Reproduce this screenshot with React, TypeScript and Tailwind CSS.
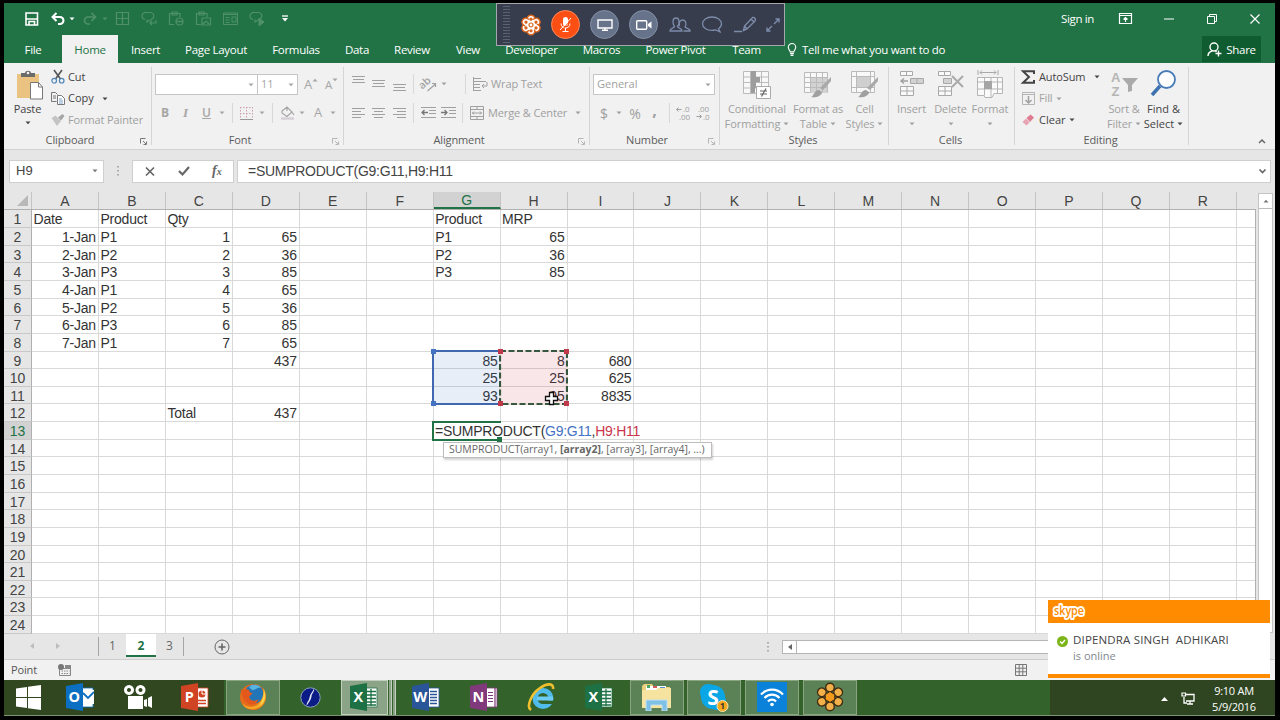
import React from 'react';

const COLUMNS = ['A', 'B', 'C', 'D', 'E', 'F', 'G', 'H', 'I', 'J', 'K', 'L', 'M', 'N', 'O', 'P', 'Q', 'R'];
const ROWS = Array.from({ length: 24 }, (_, i) => i + 1);

const CELLS: Record<string, string> = {
  A1: 'Date', B1: 'Product', C1: 'Qty', G1: 'Product', H1: 'MRP',
  A2: '1-Jan', B2: 'P1', C2: '1', D2: '65', G2: 'P1', H2: '65',
  A3: '2-Jan', B3: 'P2', C3: '2', D3: '36', G3: 'P2', H3: '36',
  A4: '3-Jan', B4: 'P3', C4: '3', D4: '85', G4: 'P3', H4: '85',
  A5: '4-Jan', B5: 'P1', C5: '4', D5: '65',
  A6: '5-Jan', B6: 'P2', C6: '5', D6: '36',
  A7: '6-Jan', B7: 'P3', C7: '6', D7: '85',
  A8: '7-Jan', B8: 'P1', C8: '7', D8: '65',
  D9: '437', G9: '85', H9: '8', I9: '680',
  G10: '25', H10: '25', I10: '625',
  G11: '93', H11: '95', I11: '8835',
  C12: 'Total', D12: '437',
};

const isRight = (value: string) => /^\d/.test(value);

interface IconProps {
  w: number;
  h: number;
  className?: string;
  children: React.ReactNode;
}

const Icon: React.FC<IconProps> = ({ w, h, className = '', children }) => (
  <svg width={w} height={h} viewBox={`0 0 ${w} ${h}`} fill="none" stroke="currentColor" className={`shrink-0 overflow-visible ${className}`}>
    {children}
  </svg>
);

const Caret: React.FC<{ className?: string }> = ({ className = '' }) => (
  <Icon w={6} h={4} className={className}>
    <path d="M0.5 0.5h5L3 3.3z" fill="currentColor" stroke="none" />
  </Icon>
);

const Launcher: React.FC<{ className?: string }> = ({ className = '' }) => (
  <Icon w={7} h={7} className={className}>
    <path d="M0.5 5.500V0.500H5.500M3 3l3 3M6.500 3.500v3H3.500" />
  </Icon>
);

/* ---------- title bar ---------- */

const TitleBar = () => (
  <div className="flex h-[32px] items-center pb-px text-white">
    <Icon w={13} h={14} className="ml-[21px]">
      <path d="M1 1h11.500v12H1z" strokeWidth="1.600" />
      <path d="M1 7h11.500M4 13V9.500h5.500V13" strokeWidth="1.600" />
    </Icon>
    <Icon w={14} h={13} className="ml-[13px]">
      <path d="M1.500 5H9a3.400 3.400 0 0 1 0 7H7M5.500 1l-4 4 4 4" strokeWidth="2" />
    </Icon>
    <Caret className="ml-[4px]" />
    <div className="flex items-center text-[#4f9068]">
      <Icon w={14} h={13} className="ml-[8px]">
        <path d="M12.500 5H5a3.400 3.400 0 0 0 0 7h2M8.500 1l4 4-4 4" strokeWidth="1.700" />
      </Icon>
      <Caret className="ml-[5px]" />
      <Icon w={13} h={13} className="ml-[8px]">
        <path d="M0.500 0.500h12v12H0.500zM6.500 0.500v12M0.500 6.500h12" strokeWidth="1.200" />
      </Icon>
      <Icon w={15} h={15} className="ml-[13px]">
        <path d="M3 8.500A3.500 3.500 0 0 1 4 1.500h5a3.500 3.500 0 0 1 1 6.500L5 11V8.500M14 9v3H8M10 10l-2 2 2 2" strokeWidth="1.200" />
      </Icon>
      <Icon w={15} h={15} className="ml-[12px]">
        <path d="M5 13.500H0.500v-11H11V6M3 2.500V1h5v3H3z" strokeWidth="1.200" />
        <circle cx="10.500" cy="10.500" r="3.500" strokeWidth="1.200" />
        <path d="M7 10.500h7" strokeWidth="1.500" />
      </Icon>
      <Icon w={15} h={15} className="ml-[12px]">
        <path d="M5 13.500H0.500v-11H11V6M3 2.500V1h5v3H3zM6 7h8.500v7H6zM7 13l3-3 3 3" strokeWidth="1.200" />
      </Icon>
      <Icon w={15} h={13} className="ml-[12px]">
        <path d="M0.500 1h14v11.500H0.500zM0.500 2.500h14M2.500 5.500h4M2.500 8h4M2.500 10.500h4M9 5h4v5H9z" />
      </Icon>
      <Icon w={15} h={15} className="ml-[12px]">
        <path d="M3 8.500A3.500 3.500 0 0 1 4 1.500h5a3.500 3.500 0 0 1 1 6.500L5 11V8.500" strokeWidth="1.200" />
        <path d="M9 7l5 4-5 4z" fill="currentColor" />
      </Icon>
    </div>
    <Icon w={6} h={7} className="ml-[17px]">
      <path d="M0 1h6" strokeWidth="1.300" />
      <path d="M0 3h6L3 6.500z" fill="currentColor" stroke="none" />
    </Icon>
    <span className="ml-[773px] w-[34px] text-[11.500px] tracking-[-0.35px] whitespace-nowrap">Sign in</span>
    <Icon w={13} h={11} className="ml-[24px]">
      <path d="M0.500 0.500h12v10H0.500zM0.500 2.500h12M6.500 9V4.500M4.500 6.500l2-2 2 2" strokeWidth="1.200" />
    </Icon>
    <Icon w={10} h={2} className="ml-[32px]">
      <path d="M0 1h10" />
    </Icon>
    <Icon w={10} h={10} className="ml-[33px]">
      <path d="M0.500 2.500h7v7h-7zM2.500 2.500v-2h7v7h-2" />
    </Icon>
    <Icon w={10} h={10} className="ml-[33px]">
      <path d="M0.500 0.500l9 9M9.500 0.500l-9 9" strokeWidth="1.200" />
    </Icon>
  </div>
);

const TabBar = () => (
  <div className="flex h-[28px] items-center text-center text-[11.500px] tracking-[-0.3px] whitespace-nowrap text-white *:pt-px">
    <span className="w-[58px]">File</span>
    <span className="flex h-full w-[56px] items-center justify-center bg-[#f1f1f1] text-[#217346]">Home</span>
    <span className="w-[55px]">Insert</span>
    <span className="w-[86px]">Page Layout</span>
    <span className="w-[74px]">Formulas</span>
    <span className="w-[48px]">Data</span>
    <span className="w-[62px]">Review</span>
    <span className="w-[50px]">View</span>
    <span className="w-[77px]">Developer</span>
    <span className="w-[63px]">Macros</span>
    <span className="w-[85px]">Power Pivot</span>
    <span className="w-[57px]">Team</span>
    <Icon w={10} h={14} className="ml-[12px]">
      <path d="M3 9.500C3 8 1 7 1 4.500a4 4 0 0 1 8 0C9 7 7 8 7 9.500zM3 11.500h4M3.500 13.300h3" strokeWidth="1.200" />
    </Icon>
    <span className="ml-[5px] w-[141px] text-left">Tell me what you want to do</span>
    <span className="ml-[259px] flex h-[26px] w-[59px] items-center justify-center gap-1 bg-[#0e5c2f]">
      <Icon w={15} h={15}>
        <circle cx="7" cy="5" r="4" strokeWidth="1.400" />
        <path d="M1 14c0-2.500 2-4.500 4.500-5M8.500 9l1 1M11.500 8.500v6M8.500 11.500h6" strokeWidth="1.400" />
      </Icon>
      Share
    </span>
  </div>
);

const Flower: React.FC<{ size: number; petal: string; core: string; line: string }> = ({ size, petal, core, line }) => (
  <svg width={size} height={size} viewBox="-14 -14 28 28" className="shrink-0">
    {[0, 60, 120, 180, 240, 300].map((deg) => (
      <g key={deg} transform={`rotate(${deg})`}>
        <path d="M0 0V-8" stroke={line} strokeWidth="4.500" />
        <path d="M0 0V-8" stroke={core} strokeWidth="2" />
        <circle cy="-8.800" r="4" fill={petal} stroke={line} strokeWidth="1.300" />
      </g>
    ))}
    <circle r="4" fill={core} />
  </svg>
);

const MeetingBar = () => (
  <div className="absolute top-[3px] left-[496px] flex h-[43px] w-[289px] items-center border border-[#a4a8ac] bg-[#373d4d] text-[#7d8cab]">
    <div className="ml-[6px] flex h-[37px] w-[7px] flex-col justify-between">
      {Array.from({ length: 13 }, (_, i) => (
        <span key={i} className="h-px bg-[#596273]" />
      ))}
    </div>
    <svg width="22" height="22" viewBox="-11 -11 22 22" className="ml-[10px]">
      {[0, 60, 120, 180, 240, 300].map((deg) => (
        <circle key={deg} cy="-6" r="3.800" fill="#fff" stroke="#d9641e" strokeWidth="1.500" transform={`rotate(${deg})`} />
      ))}
      <circle r="5.800" fill="#fff" />
      {[0, 60, 120, 180, 240, 300].map((deg) => (
        <circle key={deg} cy="-5.800" r="1.600" fill="#d9641e" transform={`rotate(${deg})`} />
      ))}
      <circle r="2" fill="none" stroke="#d9641e" strokeWidth="1.200" />
    </svg>
    <span className="ml-[9px] flex size-[29px] items-center justify-center rounded-full border border-[#ff8a5c] bg-[#fb4f14] text-white">
      <Icon w={13} h={17}>
        <rect x="4" y="1" width="5" height="9" rx="2.500" fill="currentColor" stroke="none" />
        <path d="M2 7.500c0 6 9 6 9 0M6.500 12v3.500M3.500 15.500h6M1 14L12 2" />
        <path d="M2 15L12 4" stroke="#fb4f14" />
      </Icon>
    </span>
    <span className="ml-[10px] flex size-[29px] items-center justify-center rounded-full border border-[#8591a6] bg-[#66738a] text-white">
      <Icon w={16} h={12}>
        <path d="M1 1h14v8H1z" strokeWidth="1.400" />
        <path d="M8 9v2M5 11.300h6" strokeWidth="1.400" />
      </Icon>
    </span>
    <span className="ml-[10px] flex size-[29px] items-center justify-center rounded-full border border-[#8591a6] bg-[#66738a] text-white">
      <Icon w={16} h={10}>
        <rect x="0.700" y="0.700" width="10" height="8.500" rx="1" strokeWidth="1.400" />
        <path d="M12 4l3.500-2.500v7L12 6z" fill="currentColor" stroke="none" />
      </Icon>
    </span>
    <Icon w={22} h={15} className="ml-[11px]">
      <path d="M1 14c0-3 4-2.500 4.500-4.500C3 6 3.500 1 7 1s4 5 1.500 8.500C9 11.500 13 11 13 14zM10.500 9C9.500 5 11.500 3 14 3s4 3.500 2 7c.5 1.500 5 1 5 4h-6.500" strokeWidth="1.300" />
    </Icon>
    <Icon w={20} h={17} className="ml-[11px]">
      <path d="M16.500 12.700C19 11 19.500 9.300 19.500 7.700C19.500 4 15.300 1 10 1S0.500 4 0.500 7.700 4.700 14.400 10 14.400c1.200 0 2.300-.2 3.400-.5L18 15.800z" strokeWidth="1.300" />
    </Icon>
    <Icon w={24} h={17} className="ml-[11px]">
      <path d="M1 15.500h8M10.500 14.500l1-4.500 8-8.500q1.500-.5 2.500 1t0 2.500L14 13zM18 3l3 3M11.500 10l2.500 3" strokeWidth="1.400" />
    </Icon>
    <Icon w={14} h={14} className="ml-[9px]">
      <path d="M8 6l5-5M9.500 1H13v3.500M6 8l-5 5M1 9.500V13h3.500" strokeWidth="1.400" />
    </Icon>
  </div>
);

/* ---------- ribbon ---------- */

interface GroupProps {
  label: string;
  className: string;
  launcher?: string;
  children: React.ReactNode;
}

const Group: React.FC<GroupProps> = ({ label, className, launcher, children }) => (
  <div className={`my-[4px] flex shrink-0 flex-col border-r border-[#d5d5d5] ${className}`}>
    <div className="flex h-[68px]">{children}</div>
    <div className="flex h-[13px] items-center text-[#5c5c5c]">
      <span className="flex-1 pt-[4px] pr-[2px] text-center whitespace-nowrap">{label}</span>
      {launcher && (
        <span className="w-[13px] pt-[5px]">
          <Launcher className={`ml-[2px] ${launcher}`} />
        </span>
      )}
    </div>
  </div>
);

const Sep: React.FC<{ className?: string }> = ({ className = '' }) => (
  <span className={`h-[20px] w-px shrink-0 bg-[#d8d8d8] ${className}`} />
);

const AlignLines: React.FC<{ lines: string; className?: string }> = ({ lines, className = '' }) => (
  <Icon w={14} h={12} className={className}>
    <path d={lines} />
  </Icon>
);

const ClipboardGroup = () => (
  <Group label="Clipboard" className="w-[148px]" launcher="text-[#777]">
    <div className="flex w-[47px] flex-col items-center pt-[3px] text-[#444]">
      <Icon w={28} h={30} className="ml-[5px]">
        <path d="M1 4h22v24H1z" fill="#eac282" stroke="none" />
        <path d="M5 7V3h4c0-3 6-3 6 0h4v4z" fill="#6b6b6b" stroke="none" />
        <circle cx="12" cy="3" r="1.300" fill="#f1f1f1" stroke="none" />
        <path d="M14.500 12.500h8l4 4.500v12h-12z" fill="#fff" stroke="#777" />
        <path d="M22.500 12.500V17h4" stroke="#777" />
      </Icon>
      <span className="mt-px leading-[15px]">Paste</span>
      <Caret className="mt-[5px]" />
    </div>
    <div className="flex flex-col text-[#444]">
      <div className="flex h-[20px] items-center">
        <Icon w={14} h={14} className="mr-[3px]">
          <path d="M3 0l6.500 9M11 0L4.500 9" stroke="#555" strokeWidth="1.600" />
          <circle cx="3.200" cy="10.700" r="2.300" stroke="#4f86b8" strokeWidth="1.200" />
          <circle cx="10.700" cy="10.700" r="2.300" stroke="#4f86b8" strokeWidth="1.200" />
        </Icon>
        Cut
      </div>
      <div className="flex h-[23px] items-center">
        <Icon w={14} h={13} className="mr-[3px]">
          <path d="M5.500 9.500h-5v-9h4l2 2M2 4h3M2 6h3" stroke="#777" />
          <path d="M6.500 3.500h4l3 3v6h-7z" fill="#fff" stroke="#777" />
          <path d="M8 7h3M8 9h4M8 11h4" stroke="#5b87b5" strokeWidth="0.800" />
        </Icon>
        <span className="w-[34px] tracking-normal">Copy</span>
        <Caret />
      </div>
      <div className="flex h-[20px] items-center text-[#a0a0a0]">
        <Icon w={14} h={14} className="mr-[3px]">
          <path d="M0.500 5l4-2.500 5.500 5.500-4 5z" fill="#c4c4c4" stroke="none" />
          <path d="M7 4.500L11.500 1l2 2L10 7.500z" fill="#a5a5a5" stroke="none" />
        </Icon>
        <span className="whitespace-nowrap">Format Painter</span>
      </div>
    </div>
  </Group>
);

const FontGroup = () => (
  <Group label="Font" className="w-[192px]" launcher="text-[#b5b5b5]">
    <div className="ml-[3px] flex flex-col pt-[7px] text-[#a6a6a6]">
      <div className="flex h-[21px] items-center">
        <div className="flex h-full w-[103px] items-center justify-end border border-[#c6c6c6] bg-white pr-[3px]">
          <Caret />
        </div>
        <div className="flex h-full w-[40px] items-center justify-between border border-l-0 border-[#c6c6c6] bg-white pr-[3px] pl-[3px]">
          11 <Caret />
        </div>
        <span className="ml-[6px] text-[13px] leading-none">A</span>
        <Caret className="mb-[10px] rotate-180" />
        <span className="ml-[7px] text-[11.500px] leading-none">A</span>
        <Caret className="mb-[10px]" />
      </div>
      <div className="mt-[8px] flex h-[20px] items-center">
        <span className="w-[20px] text-center text-[12px] font-bold">B</span>
        <span className="w-[21px] text-center font-['Liberation_Serif',serif] text-[13px] font-bold italic">I</span>
        <span className="w-[21px] text-center text-[12px] font-semibold underline">U</span>
        <Caret className="ml-[2px]" />
        <Sep className="ml-[7px]" />
        <Icon w={13} h={13} className="ml-[7px]">
          <path d="M0.500 0v12M6.500 0v12M12.500 0v12M0 0.500h13M0 6.500h13" stroke="#cf9fb0" strokeDasharray="1.500 1.500" />
          <path d="M0 12.500h13" stroke="#999" />
        </Icon>
        <Caret className="ml-[6px]" />
        <Sep className="ml-[7px]" />
        <Icon w={15} h={14} className="ml-[7px]">
          <path d="M2 5l5-4 5 5-5 4.500L2 7zM7 1v4M12 6l2 3" strokeWidth="1.200" />
          <path d="M1 12.500h13" stroke="#d5cfd8" strokeWidth="2.500" />
        </Icon>
        <Caret className="ml-[4px]" />
        <span className="ml-[7px] w-[12px] text-center text-[13px]">A</span>
        <Caret className="ml-[6px]" />
      </div>
    </div>
  </Group>
);

const AlignmentGroup = () => (
  <Group label="Alignment" className="w-[246px]" launcher="text-[#b5b5b5]">
    <div className="flex flex-col pt-[7px] text-[#a0a0a0]">
      <div className="flex h-[20px] items-center">
        <AlignLines className="mb-[6px] ml-[8px]" lines="M0 1.500h13M1 4.500h11M0 7.500h13" />
        <AlignLines className="ml-[6px]" lines="M0 2.500h13M1 5.500h11M0 8.500h13" />
        <AlignLines className="mt-[8px] ml-[7px]" lines="M0 2.500h13M1 5.500h11M0 8.500h13" />
        <Sep className="ml-[6px]" />
        <Icon w={16} h={15} className="ml-[7px] font-semibold">
          <text x="-1" y="9" fontSize="10.500" fill="currentColor" stroke="none" transform="rotate(-42 5 8)">ab</text>
          <path d="M6.500 14l8-7M11 6.500h3.500V10" strokeWidth="1.200" />
        </Icon>
        <Caret className="ml-[4px]" />
        <Sep className="ml-[18px]" />
        <Icon w={15} h={15} className="ml-[7px]">
          <path d="M0 1.500h8M0 4.500h13M0 7.500h7M0 10.500h7M0 13.500h8M0.500 0v14M14 5v4H9M11 7L9 9l2 2" />
        </Icon>
        <span className="ml-[3px] whitespace-nowrap">Wrap Text</span>
      </div>
      <div className="mt-[9px] flex h-[20px] items-center">
        <AlignLines className="ml-[8px]" lines="M0 1.500h13M0 4.500h9M0 7.500h13M0 10.500h9" />
        <AlignLines className="ml-[6px]" lines="M0 1.500h13M2 4.500h9M0 7.500h13M2 10.500h9" />
        <AlignLines className="ml-[7px]" lines="M0 1.500h13M4 4.500h9M0 7.500h13M4 10.500h9" />
        <Sep className="ml-[6px]" />
        <Icon w={15} h={12} className="ml-[7px]">
          <path d="M0 0.500h15M8 3.500h7M8 6.500h7M0 10.500h15" />
          <path d="M1 5.500h6M3.500 3L1 5.500 3.500 8" stroke="#777" strokeWidth="1.300" />
        </Icon>
        <Icon w={15} h={12} className="ml-[5px]">
          <path d="M0 0.500h15M8 3.500h7M8 6.500h7M0 10.500h15" />
          <path d="M0 5.500h6M3.500 3L6 5.500 3.500 8" stroke="#777" strokeWidth="1.300" />
        </Icon>
        <Sep className="ml-[6px]" />
        <Icon w={14} h={14} className="ml-[7px]">
          <path d="M0.500 0.500h13v13H0.500zM0.500 3.500h13M0.500 10.500h13M7 0v3M7 10v4M2 7h10M4 5.500L2.500 7 4 8.500M10 5.500L11.500 7 10 8.500" />
        </Icon>
        <span className="ml-[4px] w-[85px] whitespace-nowrap">Merge &amp; Center</span>
        <Caret className="ml-[2px]" />
      </div>
    </div>
  </Group>
);

const NumberGroup = () => (
  <Group label="Number" className="w-[130px]" launcher="text-[#b5b5b5]">
    <div className="ml-[3px] flex flex-col pt-[7px] text-[#a0a0a0]">
      <div className="flex h-[21px] w-[122px] items-center justify-between border border-[#c6c6c6] bg-white pr-[3px] pl-[3px] tracking-normal">
        General <Caret />
      </div>
      <div className="mt-[8px] flex h-[20px] items-center">
        <span className="w-[22px] text-center text-[14px]">$</span>
        <Caret className="ml-[1px]" />
        <span className="ml-[3px] w-[20px] text-center text-[14px]">%</span>
        <span className="mb-[6px] w-[19px] text-center text-[16px] leading-[10px] font-bold">,</span>
        <Sep className="ml-[5px]" />
        <Icon w={14} h={14} className="ml-[6px]">
          <path d="M0.500 3.500h5M2.500 1.500l-2 2 2 2" />
          <text x="7" y="6" fontSize="8" fill="currentColor" stroke="none">.0</text>
          <text x="3" y="14" fontSize="8" fill="currentColor" stroke="none">.00</text>
        </Icon>
        <Icon w={14} h={14} className="ml-[6px]">
          <text x="2" y="6" fontSize="8" fill="currentColor" stroke="none">.00</text>
          <path d="M0.500 10.500h5M3.500 8.500l2 2-2 2" />
          <text x="7" y="14" fontSize="8" fill="currentColor" stroke="none">.0</text>
        </Icon>
      </div>
    </div>
  </Group>
);

interface BigButtonProps {
  className: string;
  lines: [string, string?];
  children: React.ReactNode;
}

const BigButton: React.FC<BigButtonProps> = ({ className, lines, children }) => (
  <div className={`flex shrink-0 flex-col items-center pt-[3px] whitespace-nowrap ${className}`}>
    <div className="flex h-[31px] items-start">{children}</div>
    <span className="leading-[15px]">{lines[0]}</span>
    <span className="flex h-[15px] items-center gap-[3px] leading-[15px]">
      {lines[1]} <Caret />
    </span>
  </div>
);

const Brush = () => (
  <>
    <path d="M27 7v4l-8 9-3-2z" fill="#a8a8a8" stroke="none" />
    <path d="M7 27c3-1 3-7 8-7l3 2c0 4-6 6-11 5z" fill="#a0a0a0" stroke="none" />
  </>
);

const StylesGroup = () => (
  <Group label="Styles" className="w-[169px]">
    <BigButton className="w-[74px] tracking-[-0.05px] text-[#a0a0a0]" lines={['Conditional', 'Formatting']}>
      <Icon w={28} h={29}>
        <path d="M0.500 1.500h25v22H0.500zM7.500 1.500v22M18.500 1.500v22M0.500 7h25M0.500 12.500h25M0.500 18h25" stroke="#bbb" fill="#f8f8f8" />
        <path d="M8 1h5v6H8zM8 7h9v5H8zM8 12h5v6H8zM8 18h4v5H8z" fill="#9d9d9d" stroke="none" />
        <path d="M13.500 16.500h14v12h-14z" fill="#fff" stroke="#aaa" />
        <path d="M17 21h7M17 24h7M23 18.500l-4.500 8" stroke="#666" strokeWidth="1.200" />
      </Icon>
    </BigButton>
    <BigButton className="w-[48px] text-[#a0a0a0]" lines={['Format as', 'Table']}>
      <Icon w={28} h={29}>
        <path d="M0.500 2.500h23v20H0.500z" fill="#f8f8f8" stroke="#bbb" />
        <path d="M6 7h17v16H6z" fill="#d2d2d2" stroke="none" />
        <path d="M0.500 7.500h23M0.500 12.500h23M0.500 17.500h23M6.500 2.500v20M12.500 2.500v20M18.500 2.500v20" stroke="#bbb" />
        <Brush />
      </Icon>
    </BigButton>
    <BigButton className="w-[45px] text-[#a0a0a0]" lines={['Cell', 'Styles']}>
      <Icon w={28} h={29}>
        <path d="M0.500 1.500h23v21H0.500zM5.500 1.500v21M19.500 1.500v21M0.500 6.500h23M0.500 17.500h23" fill="#f8f8f8" stroke="#bbb" />
        <path d="M6 7h13v10H6z" fill="#cfcfcf" stroke="none" />
        <Brush />
      </Icon>
    </BigButton>
  </Group>
);

const CellsGroup = () => (
  <Group label="Cells" className="w-[126px]">
    <BigButton className="w-[45px] text-[#a0a0a0]" lines={['Insert']}>
      <Icon w={25} h={28}>
        <path d="M1.500 1.500h12v4h-12zM7.500 1.500v4M1.500 16.500h13v9h-13zM1.500 21h13M8 16.500v9" fill="#fafafa" stroke="#a8a8a8" />
        <path d="M11.500 8.500h13v5h-13zM18 8.500v5" fill="#d2d2d2" stroke="#a8a8a8" />
        <path d="M2 11h7M5 8.500L2 11l3 2.500" strokeWidth="1.400" />
      </Icon>
    </BigButton>
    <BigButton className="w-[33px] text-[#a0a0a0]" lines={['Delete']}>
      <Icon w={27} h={28}>
        <path d="M1.500 1.500h12v4h-12zM7.500 1.500v4M1.500 16.500h13v9h-13zM1.500 21h13M8 16.500v9" fill="#fafafa" stroke="#a8a8a8" />
        <path d="M6.500 8.500h8v5h-8z" fill="#d2d2d2" stroke="#a8a8a8" />
        <path d="M15 6l11 11M26 6L15 17" stroke="#aaa" strokeWidth="2" />
      </Icon>
    </BigButton>
    <BigButton className="w-[46px] tracking-normal text-[#a0a0a0]" lines={['Format']}>
      <Icon w={27} h={29}>
        <path d="M1 0v5M21 0v5M3 2.500h16M5 0.500l-2 2 2 2M17 0.500l2 2-2 2" stroke="#aaa" />
        <path d="M0.500 7.500h25v16H17l-2 4H8l-1-2H0.500zM0.500 12h25M0.500 19h25M7.500 7.500v18M14 7.500V27M20.500 7.500v16" fill="#fafafa" stroke="#b5b5b5" />
        <path d="M7 11h8v8H7z" fill="#a5a5a5" stroke="none" />
      </Icon>
    </BigButton>
  </Group>
);

const EditingGroup = () => (
  <Group label="Editing" className="w-[174px]">
    <div className="ml-[6px] flex w-[87px] flex-col text-[#444]">
      <div className="flex h-[20px] items-center">
        <Icon w={14} h={14}>
          <path d="M13 4V1.200H2L8 7l-6 5.800h11V10" strokeWidth="2" />
        </Icon>
        <span className="ml-[4px] w-[49px]">AutoSum</span>
        <Caret className="ml-[6px]" />
      </div>
      <div className="flex h-[23px] items-center text-[#a0a0a0]">
        <Icon w={13} h={13} className="ml-px">
          <path d="M0.500 0.500h12v12H0.500zM0.500 2.500h12" stroke="#b5b5b5" />
          <path d="M6.500 4v7M3.500 8l3 3 3-3" strokeWidth="1.500" />
        </Icon>
        <span className="ml-[4px]">Fill</span>
        <Caret className="ml-[3px]" />
      </div>
      <div className="flex h-[20px] items-center">
        <Icon w={13} h={12} className="ml-px">
          <path d="M4.500 4l4-3.500 3.500 3-4 4.500z" fill="#e07a90" stroke="none" />
          <path d="M0.500 8L4 4.500l3.500 4-3 3z" fill="#e6a3b2" stroke="none" />
        </Icon>
        <span className="ml-[4px] tracking-normal">Clear</span>
        <Caret className="ml-[3px]" />
      </div>
    </div>
    <BigButton className="w-[32px] text-[#a0a0a0]" lines={['Sort &', 'Filter']}>
      <Icon w={27} h={28} className="font-['Liberation_Sans',Arial,sans-serif] tracking-normal">
        <text x="0" y="11.500" fontSize="13" fontWeight="700" fill="#b5b5b5" stroke="none">A</text>
        <text x="0.500" y="25.500" fontSize="13" fontWeight="700" fill="#b5b5b5" stroke="none">Z</text>
        <path d="M11 8h16l-6 7v6l-4 1v-7z" fill="#aaa" stroke="none" />
      </Icon>
    </BigButton>
    <BigButton className="w-[47px] tracking-normal text-[#444]" lines={['Find &', 'Select']}>
      <Icon w={27} h={28}>
        <path d="M10 16L2 25" stroke="#3f73b0" strokeWidth="3.500" />
        <circle cx="16.500" cy="9.500" r="8.500" fill="#fdfdfd" stroke="#4a7db8" strokeWidth="1.800" />
      </Icon>
    </BigButton>
  </Group>
);

const Ribbon = () => (
  <div className="flex h-[87px] border-b border-[#d2d2d2] bg-[#f1f1f1] text-[11px] tracking-[-0.12px]">
    <ClipboardGroup />
    <FontGroup />
    <AlignmentGroup />
    <NumberGroup />
    <StylesGroup />
    <CellsGroup />
    <EditingGroup />
    <Icon w={8} h={6} className="mt-auto mb-[5px] ml-[69px] text-[#666]">
      <path d="M1 5l3-3 3 3" strokeWidth="1.500" />
    </Icon>
  </div>
);

/* ---------- formula bar ---------- */

const FormulaBar = () => (
  <div className="flex h-[42px] items-center pl-[5px] font-['Liberation_Sans',Arial,sans-serif] text-[14px] text-[#444]">
    <div className="flex h-[23px] w-[95px] items-center justify-between border border-[#cfcfcf] bg-white pr-[5px] pl-[6px]">
      <span className="text-[13px]">H9</span>
      <Caret className="text-[#777]" />
    </div>
    <Icon w={2} h={10} className="ml-[13px] text-[#999]">
      <path d="M1 0v10" strokeDasharray="1.500 2.500" strokeWidth="1.500" />
    </Icon>
    <div className="ml-[13px] flex h-[23px] w-[102px] items-center border border-[#cfcfcf] bg-white text-[#666]">
      <Icon w={10} h={9} className="ml-[12px]">
        <path d="M1 0.500l8 8M9 0.500l-8 8" strokeWidth="1.700" />
      </Icon>
      <Icon w={12} h={10} className="ml-[23px]">
        <path d="M1 5l3.500 3.500L11 1" strokeWidth="2.200" />
      </Icon>
      <span className="ml-[22px] font-['Liberation_Serif',serif] text-[14px] leading-none font-bold italic">
        f<span className="text-[10px]">x</span>
      </span>
    </div>
    <div className="ml-[3px] flex h-[23px] w-[1034px] items-center justify-between border border-[#cfcfcf] bg-white pr-[4px] pl-[10px]">
      <span className="tracking-[-0.27px]">=SUMPRODUCT(G9:G11,H9:H11</span>
      <Icon w={7} h={5} className="text-[#666]">
        <path d="M0.500 0.500l3 3 3-3" strokeWidth="1.700" />
      </Icon>
    </div>
  </div>
);

/* ---------- sheet ---------- */

const ColumnHeader = () => (
  <div className="flex h-[18.400px] border-b border-[#b0b0b0] text-[14px] text-[#444]">
    <div className="flex w-[28px] shrink-0 items-end justify-end border-r border-[#c4c4c4] pr-[3px] pb-[3px]">
      <Icon w={11} h={11}>
        <path d="M11 0v11H0z" fill="#b8b8b8" stroke="none" />
      </Icon>
    </div>
    {COLUMNS.map((col) => (
      <div
        key={col}
        className={`flex w-[66.940px] shrink-0 items-center justify-center border-r border-[#c4c4c4] ${
          col === 'G' ? 'border-b-2 border-b-[#217346] bg-[#d2d2d2] pt-[2px] text-[#217346]' : 'pt-px'
        }`}
      >
        {col}
      </div>
    ))}
  </div>
);

const SheetRow: React.FC<{ row: number }> = ({ row }) => (
  <div className="flex h-[17.650px] text-[14px] leading-[18px] text-[#333]">
    <div
      className={`w-[28px] shrink-0 border-r border-b border-r-[#b0b0b0] border-b-[#c8c8c8] text-center ${
        row === 13 ? 'bg-[#d2d2d2] text-[#217346]' : 'bg-[#e6e6e6] text-[#444]'
      }`}
    >
      {row}
    </div>
    {COLUMNS.map((col) => {
      const value = CELLS[`${col}${row}`] ?? '';
      return (
        <div
          key={col}
          className={`w-[66.940px] shrink-0 border-r border-b border-[#d9d9d9] tracking-[-0.2px] ${
            isRight(value) ? 'pr-[2px] text-right' : 'pl-[1.500px]'
          }`}
        >
          {value}
        </div>
      );
    })}
    <div className="flex-1 border-b border-[#d9d9d9]" />
  </div>
);

const Handle: React.FC<{ className: string }> = ({ className }) => (
  <span className={`absolute size-[5px] ${className}`} />
);

const FormulaEditor = () => (
  <>
    <div className="absolute top-[350px] left-[432px] h-[55px] w-[69px] border-2 border-[#3f68b0] bg-[#4472c4]/12">
      <Handle className="-top-[3px] -left-[3px] bg-[#4472c4]" />
      <Handle className="-bottom-[3px] -left-[3px] bg-[#4472c4]" />
    </div>
    <div className="absolute top-[350px] left-[499px] h-[55px] w-[69px] bg-[#c9344a]/12">
      <svg width="69" height="55" className="absolute top-0 left-0" fill="none">
        <path d="M1 1h67v53H1z" stroke="#f0dede" strokeWidth="2" />
        <path d="M1 1h67v53H1z" stroke="#37583f" strokeWidth="2.200" strokeDasharray="6 2.500" />
      </svg>
      <Handle className="-top-px -left-px bg-[#c0394b]" />
      <Handle className="-top-px -right-px bg-[#c0394b]" />
      <Handle className="-bottom-px -left-px bg-[#c0394b]" />
      <Handle className="-right-px -bottom-px bg-[#c0394b]" />
    </div>
    <div className="absolute top-[422px] left-[433px] h-[17px] w-[200px] bg-white pl-[2px] text-[14px] leading-[19px] tracking-[-0.26px] whitespace-nowrap text-[#333]">
      =SUMPRODUCT(<span className="text-[#4472c4]">G9:G11</span>,<span className="text-[#c9344a]">H9:H11</span>
    </div>
    <div className="absolute top-[421px] left-[432px] h-[20px] w-[69px] border-y-2 border-l-2 border-[#217346]">
      <Handle className="-right-px -bottom-[3px] bg-[#217346]" />
    </div>
    <div className="absolute top-[442px] left-[443px] flex h-[16px] w-[269px] items-center border border-[#bdbdbd] bg-white pl-[5px] font-['Open_Sans','Noto_Sans',sans-serif] text-[10.500px] tracking-[-0.03px] whitespace-pre text-[#666] shadow-[1px_2px_2px_rgba(0,0,0,0.18)]">
      SUMPRODUCT(array1, <b>[array2]</b>, [array3], [array4], ...)
    </div>
    <svg width="15" height="15" className="absolute top-[391px] left-[544px]">
      <path d="M5.500 1.500h4v4h4v4h-4v4h-4v-4h-4v-4h4z" fill="#fff" stroke="#111" strokeWidth="1.300" />
    </svg>
  </>
);

const Sheet = () => (
  <div className="flex font-['Liberation_Sans',Arial,sans-serif]">
    <div className="w-[1252px]">
      <ColumnHeader />
      <div className="border-r border-[#b0b0b0] bg-white">
        {ROWS.map((row) => (
          <SheetRow key={row} row={row} />
        ))}
      </div>
    </div>
    <div className="mt-[1px] ml-[2px] h-[440px] w-[15px] border border-[#c4c4c4] bg-white">
      <div className="flex h-[15px] items-center justify-center border-b border-[#bbb]">
        <Caret className="rotate-180 text-[#777]" />
      </div>
    </div>
  </div>
);

const SheetTabs = () => (
  <div className="flex h-[26px] border-b border-[#cdcdcd] bg-[#e6e6e6] text-[12px] text-[#666]">
    <div className="flex w-[94px] items-center text-[#bdbdbd]">
      <Icon w={4} h={6} className="ml-[26px]">
        <path d="M4 0v6L0 3z" fill="currentColor" stroke="none" />
      </Icon>
      <Icon w={4} h={6} className="ml-[22px]">
        <path d="M0 0v6l4-3z" fill="currentColor" stroke="none" />
      </Icon>
    </div>
    <div className="mt-[3px] flex h-[19px] w-[28px] items-center justify-center border-l border-[#a6a6a6]">1</div>
    <div className="flex h-[23px] w-[30px] items-center justify-center border-b-2 border-[#217346] bg-white pt-[4px] font-bold text-[#217346]">2</div>
    <div className="mt-[3px] flex h-[19px] w-[28px] items-center justify-center border-r border-[#a6a6a6]">3</div>
    <Icon w={16} h={16} className="mt-[5px] ml-[30px]">
      <circle cx="8" cy="8" r="7" />
      <path d="M8 4.500v7M4.500 8h7" strokeWidth="1.600" />
    </Icon>
    <Icon w={2} h={10} className="mt-[8px] ml-[537px] text-[#999]">
      <path d="M1 0v10" strokeDasharray="1.500 2.500" strokeWidth="1.500" />
    </Icon>
    <div className="mt-[6px] ml-[13px] flex h-[14px] w-[472px] border border-[#b5b5b5] bg-white">
      <div className="flex w-[14px] items-center justify-center border-r border-[#b5b5b5]">
        <Icon w={4} h={6}>
          <path d="M4 0v6L0 3z" fill="currentColor" stroke="none" />
        </Icon>
      </div>
    </div>
  </div>
);

const StatusBar = () => (
  <div className="flex h-[20px] items-center bg-[#f1f1f1] text-[11px] text-[#555]">
    <span className="ml-[7px] w-[47px] tracking-[-0.15px]">Point</span>
    <Icon w={13} h={12} className="text-[#888]">
      <path d="M3 4.500h9.500v7H1.500V5" />
      <path d="M7 1h6v4H7z" fill="currentColor" stroke="none" />
      <path d="M3.500 7h8M3.500 9.500h8" strokeDasharray="1.500 1" />
      <circle cx="3" cy="3" r="3" fill="#777" stroke="none" />
    </Icon>
    <Icon w={12} h={12} className="ml-[944px] text-[#777]">
      <path d="M0.500 0.500h11v11H0.500zM4.200 0.500v11M7.800 0.500v11M0.500 4.200h11M0.500 7.800h11" />
    </Icon>
  </div>
);

/* ---------- taskbar ---------- */

interface OfficeIconProps {
  letter: string;
  color: string;
  children: React.ReactNode;
}

const OfficeIcon: React.FC<OfficeIconProps> = ({ letter, color, children }) => (
  <svg width="28" height="28" viewBox="0 0 28 28">
    <path d="M15 5h12v19H15z" fill="#fff" stroke={color} strokeWidth="0.800" />
    {children}
    <path d="M0 3l17-3v28L0 25z" fill={color} />
    <text x="8.300" y="19.300" fontSize="14.500" fontWeight="700" fill="#fff" textAnchor="middle">{letter}</text>
  </svg>
);

const ExcelIcon = () => (
  <OfficeIcon letter="X" color="#1e7145">
    <path d="M17 8.500h9M17 12h9M17 15.500h9M17 19h9M17 22h9M21 6v17" stroke="#1e7145" strokeWidth="1.300" />
  </OfficeIcon>
);

const Slot: React.FC<{ open?: boolean; children: React.ReactNode }> = ({ open, children }) => (
  <div className="flex w-[57.700px] shrink-0 justify-center">
    <div
      className={`flex h-full w-[54px] items-center justify-center ${
        open ? 'border border-[#8ba583] bg-[#5b8256]' : ''
      }`}
    >
      {children}
    </div>
  </div>
);

const Taskbar = () => (
  <div className="flex h-[36px] border-b border-[#7d9475] bg-[#33622b]">
    <div className="flex bg-[#30471f]">
      <div className="flex w-[47px] items-center justify-center pl-px">
        <svg width="25" height="25" viewBox="0 0 25 25" fill="#fff">
          <path d="M0 3.500l11-1.600V12H0zM12 1.700L25 0v12H12zM0 13h11v10L0 21.500zM12 13h13v12l-13-1.800z" />
        </svg>
      </div>
      <Slot>
        <OfficeIcon letter="O" color="#0b6fc2">
          <path d="M16 7h12v14H16z" fill="#fff" stroke="none" />
          <path d="M17 10l5 5 6-6" stroke="#0b6fc2" strokeWidth="1.800" fill="none" />
        </OfficeIcon>
      </Slot>
      <Slot>
        <svg width="28" height="25" viewBox="0 0 28 25" fill="#fff">
          <path fillRule="evenodd" d="M5 0a5 5 0 1 0 .01 0zM5 3a2 2 0 1 1-.01 0zM16.500 0a5 5 0 1 0 .01 0zM16.500 3a2 2 0 1 1-.01 0z" />
          <path d="M4 11h15v13H4zM20 15l3-1v8l-3-1zM24 13l4-2v12l-4-2z" />
        </svg>
      </Slot>
      <Slot>
        <OfficeIcon letter="P" color="#d04423">
          <circle cx="21" cy="11" r="3.500" fill="#d04423" />
          <path d="M21 11V6M21 11h5" stroke="#fff" />
          <path d="M17 17.500h8M17 20.500h8" stroke="#d04423" strokeWidth="1.500" />
        </OfficeIcon>
      </Slot>
    </div>
    <Slot open>
      <svg width="28" height="28" viewBox="0 0 28 28">
        <circle cx="14" cy="14" r="13" fill="#e66b1a" />
        <circle cx="15" cy="11" r="9.500" fill="#2276b8" />
        <path d="M10 4c3-3 9-3 12 1-4-1-5 2-9 2z" fill="#58b3df" />
        <path d="M1.500 6c1 1 2 1 3 1 2-1 4-1 6 0-1 2 1 3 3 3-1 3-4 2-3 5 2 4 7 3 9 1-1 5-7 7-11 4C3 17 4 12 1.500 6z" fill="#e4581b" />
        <path d="M24 5c5 7 3 17-5 20C12 28 5 25 3 20c5 5 13 5 17 0 4-4 5-10 4-15z" fill="#f5a623" />
        <path d="M25 7c3 7 0 14-5 16 3-5 5-9 5-16z" fill="#fbd04a" />
      </svg>
    </Slot>
    <Slot>
      <svg width="21" height="21" viewBox="0 0 21 21">
        <circle cx="10.500" cy="10.500" r="9.700" fill="#0b1c86" stroke="#8ca0b8" />
        <path d="M14 1.500c1 3-2.500 5-2.500 8s-3 6-5 9.500c0-4 2.500-5 3-8.500s3-5.500 4.500-9z" fill="#e4e8f4" />
      </svg>
    </Slot>
    <div className="flex w-[57.700px] shrink-0 pl-[1.500px]">
      <div className="flex h-full w-[47px] items-center justify-center border border-[#c3cfbe] bg-[#8ba387]">
        <ExcelIcon />
      </div>
      <span className="ml-[1px] w-[3px] border-r border-[#c3cfbe] bg-[#8ba387]" />
      <span className="ml-[1px] w-[3px] border-r border-[#c3cfbe] bg-[#8ba387]" />
    </div>
    <Slot>
      <OfficeIcon letter="W" color="#2a5699">
        <path d="M18 8.500h7M18 11.500h7M18 14.500h7M18 17.500h7M18 20.500h7" stroke="#2a5699" strokeWidth="1.300" />
      </OfficeIcon>
    </Slot>
    <Slot>
      <OfficeIcon letter="N" color="#80397b">
        <path d="M18 9.500h5M18 12.500h5M18 15.500h5M18 18.500h5M25 5v19" stroke="#80397b" strokeWidth="1.200" />
      </OfficeIcon>
    </Slot>
    <Slot>
      <svg width="29" height="29" viewBox="0 0 29 29" fill="none">
        <circle cx="16" cy="15.500" r="8" stroke="#4fbcec" strokeWidth="5" />
        <path d="M17 17.500h12v3.500H17z" fill="#33622b" />
        <path d="M10 13.500h16v4H10z" fill="#6fccf2" />
        <path d="M4 27C-1 24 4 11 13 5c7-5 14-5 13 1" stroke="#f1c02e" strokeWidth="2.600" />
      </svg>
    </Slot>
    <Slot>
      <ExcelIcon />
    </Slot>
    <Slot open>
      <svg width="31" height="28" viewBox="0 0 31 28">
        <path d="M1 3l2-2h8l2 3h16v21H1z" fill="#e9cf7c" />
        <path d="M5 3h20v5H5z" fill="#fff" />
        <path d="M6 2h3v3H6z" fill="#4aa564" />
        <path d="M12 3h4v2h-4z" fill="#d75b5b" />
        <path d="M19 4h5v3h-5z" fill="#4f8ed0" />
        <path d="M1 7h14l2-2h13v20H1z" fill="#f6e3a0" />
        <path d="M5 28V17h21v11h-5v-6H10v6z" fill="#7fc0e6" stroke="#bfe0f3" />
      </svg>
    </Slot>
    <Slot open>
      <svg width="30" height="29" viewBox="0 0 30 29">
        <rect x="1" y="1" width="17" height="17" rx="8" fill="#0aa6e6" />
        <rect x="10" y="10" width="17" height="17" rx="8" fill="#0aa6e6" />
        <circle cx="14" cy="14" r="12" fill="#0aa6e6" />
        <text x="14" y="21.500" fontSize="21" fontWeight="700" fill="#fff" textAnchor="middle">S</text>
        <circle cx="23.500" cy="23" r="5.500" fill="#f5a81c" stroke="#fbe3ad" />
        <text x="23.500" y="26.300" fontSize="8.500" fontWeight="700" fill="#333" textAnchor="middle">1</text>
      </svg>
    </Slot>
    <Slot open>
      <div className="flex size-[30px] items-center justify-center bg-[#0b82da]">
        <svg width="24" height="19" viewBox="0 0 24 19" fill="none" stroke="#fff" strokeWidth="2.200">
          <path d="M1 6.500c6-6.500 16-6.500 22 0M4.500 10c4-4.500 11-4.500 15 0M8 13.500c2-2.500 6-2.500 8 0" />
          <circle cx="12" cy="16.500" r="1.800" fill="#fff" stroke="none" />
        </svg>
      </div>
    </Slot>
    <Slot open>
      <Flower size={30} petal="#f2b04a" core="#f59a1c" line="#3f2a12" />
    </Slot>
    <div className="ml-auto flex w-[225px] items-center bg-[#2f4521] text-white">
      <Icon w={7} h={4} className="mt-[3px] ml-[111px]">
        <path d="M0 4h7L3.500 0z" fill="currentColor" stroke="none" />
      </Icon>
      <Icon w={14} h={13} className="mt-[2px] ml-[13px]">
        <path d="M5 2.500h8v6.500H5M9 9v2.500M6 12h6M3 5v6h3" strokeWidth="1.300" />
        <path d="M1 1h3.500v3H1z" strokeWidth="1.200" />
      </Icon>
      <div className="ml-[13px] w-[52px] pt-[3px] text-center text-[11px] leading-[16px] tracking-[-0.25px] whitespace-nowrap">
        <div>9:10 AM</div>
        <div>5/9/2016</div>
      </div>
    </div>
  </div>
);

const SkypeToast = () => (
  <div className="absolute top-[600px] left-[1048px] flex h-[78px] w-[222px] flex-col border-b-4 border-[#ff8c00] bg-white">
    <div className="flex h-[23px] items-center bg-[#ff8c00] pl-[4px]">
      <svg width="34" height="17" viewBox="0 0 34 17" className="overflow-visible">
        <text x="2" y="11.500" fontSize="13" fontWeight="600" fill="#ff8c00" stroke="#fff" strokeWidth="4" strokeLinejoin="round" paintOrder="stroke" textLength="30" lengthAdjust="spacingAndGlyphs">skype</text>
      </svg>
    </div>
    <div className="flex pt-[8px] pl-[9px]">
      <svg width="11" height="11" viewBox="0 0 11 11" className="mt-[5px]">
        <circle cx="5.500" cy="5.500" r="5.500" fill="#7cb518" />
        <path d="M3 5.500l2 2 3-3.500" stroke="#fff" strokeWidth="1.400" fill="none" />
      </svg>
      <div className="ml-[5px] whitespace-pre">
        <div className="text-[11.500px] leading-[17px] tracking-[0.16px] text-[#444]">DIPENDRA SINGH  ADHIKARI</div>
        <div className="text-[11px] leading-[15px] text-[#7f8790]">is online</div>
      </div>
    </div>
  </div>
);

export default function App() {
  return (
    <div className="relative h-[720px] w-[1280px] overflow-hidden bg-black pt-[3px] pr-[5px] pl-[4px] font-['Open_Sans','Noto_Sans',sans-serif]">
      <div className="flex h-[713px] flex-col overflow-hidden bg-[#e6e6e6]">
        <div className="bg-[#217346]">
          <TitleBar />
          <TabBar />
        </div>
        <Ribbon />
        <FormulaBar />
        <Sheet />
        <SheetTabs />
        <StatusBar />
        <Taskbar />
      </div>
      <div className="font-['Liberation_Sans',Arial,sans-serif]">
        <FormulaEditor />
      </div>
      <MeetingBar />
      <SkypeToast />
    </div>
  );
}
